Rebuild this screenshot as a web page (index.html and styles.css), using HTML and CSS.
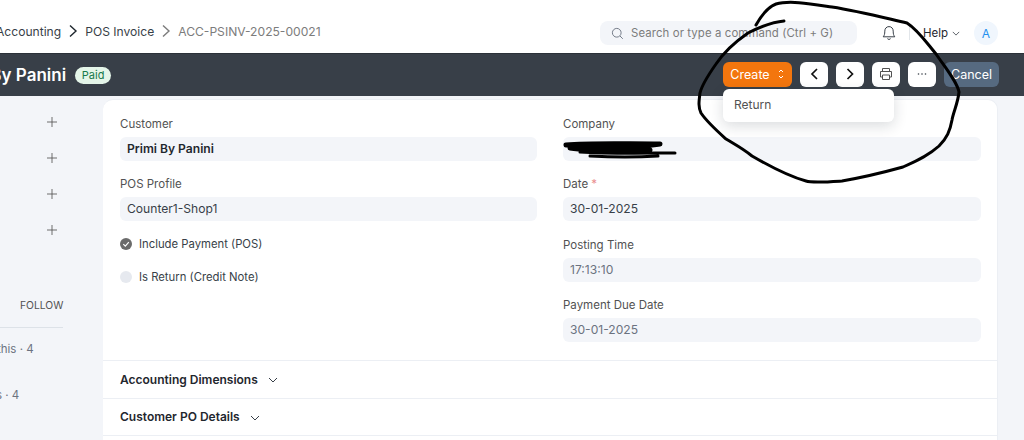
FILE: index.html
```html
<!DOCTYPE html>
<html lang="en">
<head>
<meta charset="utf-8">
<title>ACC-PSINV-2025-00021</title>
<link rel="stylesheet" href="styles.css">
</head>
<body>
<header class="topnav">
  <nav class="crumbs">
    <span class="crumb">Accounting</span>
    <svg class="crumb-sep" viewBox="0 0 10 14"><path d="M2 1.5 8 7 2 12.5"/></svg>
    <span class="crumb">POS Invoice</span>
    <svg class="crumb-sep crumb-sep-muted" viewBox="0 0 10 14"><path d="M2 1.5 8 7 2 12.5"/></svg>
    <span class="crumb crumb-muted">ACC-PSINV-2025-00021</span>
  </nav>
  <div class="search">
    <svg class="search-icon" viewBox="0 0 14 14"><circle cx="6.2" cy="6.2" r="4.7"/><path d="m9.7 9.7 3 3"/></svg>
    <span>Search or type a command (Ctrl + G)</span>
  </div>
  <svg class="bell" viewBox="0 0 16 16"><path d="M8 1.6c-2.6 0-4.2 2-4.2 4.5 0 3-.5 4.4-1.6 5.7h11.6c-1.100-1.300-1.600-2.700-1.600-5.700 0-2.500-1.600-4.500-4.200-4.500Z"/><path d="M6.400 13.600c.4 1 2.800 1 3.200 0"/></svg>
  <span class="nav-divider"></span>
  <span class="help">Help</span>
  <svg class="help-chev" viewBox="0 0 10 6"><path d="m1 1 4 4 4-4"/></svg>
  <span class="avatar">A</span>
</header>

<section class="pagebar">
  <div class="title-group">
    <h1 class="title">Primi By Panini</h1>
    <span class="badge">Paid</span>
  </div>
  <div class="actions">
    <button class="btn btn-create">Create
      <svg class="updown" viewBox="0 0 8 12"><path d="m2 4 2-2 2 2M2 8l2 2 2-2"/></svg>
    </button>
    <button class="btn btn-icon"><svg class="nav-icon" viewBox="0 0 10 14"><path d="M8 2 3 7l5 5"/></svg></button>
    <button class="btn btn-icon"><svg class="nav-icon" viewBox="0 0 10 14"><path d="m2.500 2 5 5-5 5"/></svg></button>
    <button class="btn btn-icon"><svg class="print-icon" viewBox="0 0 14 14"><path d="M3.500 4.500V1.500h7v3M3.500 10H1.500V4.500h11V10h-2"/><path d="M3.500 8h7v4.500h-7z"/></svg></button>
    <button class="btn btn-icon"><svg class="more-icon" viewBox="0 0 10 4"><circle cx="1.500" cy="2" r=".8"/><circle cx="5" cy="2" r=".8"/><circle cx="8.500" cy="2" r=".8"/></svg></button>
    <button class="btn btn-cancel">Cancel</button>
  </div>
  <div class="menu">Return</div>
</section>

<main class="page">
  <aside class="sidebar">
    <ul class="add-list">
      <li class="add-row"><svg class="plus" viewBox="0 0 12 12"><path d="M6 0v12M0 6h12"/></svg></li>
      <li class="add-row"><svg class="plus" viewBox="0 0 12 12"><path d="M6 0v12M0 6h12"/></svg></li>
      <li class="add-row"><svg class="plus" viewBox="0 0 12 12"><path d="M6 0v12M0 6h12"/></svg></li>
      <li class="add-row"><svg class="plus" viewBox="0 0 12 12"><path d="M6 0v12M0 6h12"/></svg></li>
    </ul>
    <div class="follow">FOLLOW</div>
    <div class="stat stat-first">this · 4</div>
    <div class="stat stat-second">s · 4</div>
  </aside>
  <article class="card">
    <div class="form-grid">
      <div class="col">
        <div class="field">
          <label class="label">Customer</label>
          <div class="input input-bold">Primi By Panini</div>
        </div>
        <div class="field">
          <label class="label">POS Profile</label>
          <div class="input">Counter1-Shop1</div>
        </div>
        <div class="check check-first"><span class="tick"><svg viewBox="0 0 12 12"><path d="m3.300 6.200 2 2 3.500-4"/></svg></span>Include Payment (POS)</div>
        <div class="check"><span class="tick tick-off"></span>Is Return (Credit Note)</div>
      </div>
      <div class="col">
        <div class="field">
          <label class="label">Company</label>
          <div class="input"></div>
        </div>
        <div class="field">
          <label class="label">Date <span class="req">*</span></label>
          <div class="input">30-01-2025</div>
        </div>
        <div class="field">
          <label class="label">Posting Time</label>
          <div class="input input-muted">17:13:10</div>
        </div>
        <div class="field">
          <label class="label">Payment Due Date</label>
          <div class="input input-muted">30-01-2025</div>
        </div>
      </div>
    </div>
    <div class="section">Accounting Dimensions <svg class="sec-chev" viewBox="0 0 10 6"><path d="m1 1 4 4 4-4"/></svg></div>
    <div class="section">Customer PO Details <svg class="sec-chev" viewBox="0 0 10 6"><path d="m1 1 4 4 4-4"/></svg></div>
    <div class="section section-empty"></div>
  </article>
</main>

<svg class="ink" viewBox="0 0 1024 440">
  <path class="ink-thin" d="M756 25C761 16 768 7 776 4C790 0 812 4 832 7C858 11 885 18 907 23C918 30 926 42 936 54C947 70 957 82 959 92C958 103 953 113 952 120C950 131 947 138 939 146C929 155 919 160 903 167C885 172 865 177 842 181C826 182 812 183 806 181C791 177 771 167 752 156C742 148 734 144 726 139C716 130 707 122 701 113C698 107 699 101 700 93C702 84 709 74 716 64C724 52 735 42 748 33C760 27 772 22 784 21"/>
  <path class="ink-scrub" d="M566 145C590 143 620 144 660 144C640 147 590 148 570 148C590 151 620 150 650 150"/>
  <path class="ink-thin" d="M580 152C610 154 650 153 675 153M590 156C610 157 640 157 658 156"/>
</svg>
</body>
</html>
```
FILE: styles.css
```css
* { box-sizing: border-box; }
html, body { margin: 0; padding: 0; }
body {
  width: 1024px;
  height: 440px;
  overflow: hidden;
  position: relative;
  background: #f3f5f9;
  font-family: Inter, "Liberation Sans", sans-serif;
  color: #1f272e;
}
.topnav {
  height: 53px;
  background: #fff;
  display: flex;
  align-items: center;
  padding: 13px 26px 0 0;
}
.crumbs {
  display: flex;
  align-items: center;
  margin-left: -4px;
  width: 604px;
  font-size: 12.1px;
  margin-top: -4px;
}
.crumb { color: #383f48; }
.crumb-muted { color: #7c7c7c; }
.crumb-sep { width: 10px; height: 14px; margin: 0 7px; }
.crumb-sep path { fill: none; stroke: #1f272e; stroke-width: 1.4; }
.crumb-sep-muted path { stroke: #7c7c7c; }
.search {
  width: 257px;
  height: 24px;
  border-radius: 8px;
  background: #f3f5f9;
  display: flex;
  align-items: center;
  padding-left: 11px;
  font-size: 11.4px;
  color: #7c7c7c;
  letter-spacing: .1px;
}
.search-icon { width: 13px; height: 13px; margin-right: 7px; }
.search-icon circle, .search-icon path { fill: none; stroke: #6b7280; stroke-width: 1; }
.bell { width: 16px; height: 16px; margin-left: 24px; }
.bell path { fill: none; stroke: #383f48; stroke-width: 1; }
.nav-divider { width: 1px; height: 14px; background: #e2e6ea; margin-left: 12px; }
.help { font-size: 11.5px; color: #1f272e; margin-left: 13px; }
.help-chev { width: 8px; height: 5px; margin-left: 4px; }
.help-chev path, .sec-chev path { fill: none; stroke: #383f48; stroke-width: 1; }
.avatar {
  width: 24px;
  height: 24px;
  border-radius: 50%;
  background: #f0f6fd;
  color: #2490ef;
  font-size: 12px;
  display: flex;
  align-items: center;
  justify-content: center;
  margin-left: auto;
}
.pagebar {
  height: 43px;
  background: #383f48;
  border-top: 1px solid #2b3138;
  display: flex;
  align-items: center;
  justify-content: space-between;
  padding-right: 25px;
  position: relative;
  z-index: 2;
}
.title-group { display: flex; align-items: center; margin-left: -56px; }
.title { margin: 0; font-size: 17px; font-weight: 600; color: #fff; white-space: nowrap; }
.badge {
  margin-left: 9px;
  width: 36px;
  height: 17px;
  border-radius: 9px;
  background: #e4f5e9;
  color: #16794c;
  font-size: 11px;
  display: flex;
  align-items: center;
  justify-content: center;
}
.actions { display: flex; gap: 8px; margin-bottom: 2px; }
.btn {
  height: 25px;
  border: 0;
  border-radius: 6px;
  padding: 0;
  font-family: inherit;
  font-size: 12.5px;
  display: flex;
  align-items: center;
  justify-content: center;
}
.btn-create { width: 69px; background: #f3760e; color: #fff; }
.updown { width: 8px; height: 12px; margin-left: 7px; }
.updown path { fill: none; stroke: #fff; stroke-width: 1; }
.btn-icon { width: 28px; background: #fff; color: #1f272e; }
.nav-icon { width: 10px; height: 14px; }
.nav-icon path { fill: none; stroke: #111; stroke-width: 1.700; }
.print-icon { width: 14px; height: 14px; }
.print-icon path { fill: none; stroke: #525252; stroke-width: 1; }
.more-icon { width: 10px; height: 4px; }
.more-icon circle { fill: #383f48; }
.btn-cancel { width: 55px; background: #566a80; color: #fff; }
.menu {
  position: absolute;
  left: 723px;
  top: 35px;
  width: 171px;
  height: 33px;
  background: #fff;
  border-radius: 6px;
  box-shadow: 0 4px 14px rgba(25, 39, 52, .16);
  padding: 8px 0 0 11px;
  font-size: 12px;
  color: #525252;
}
.page { display: flex; padding-top: 3px; height: 344px; }
.sidebar { width: 103px; flex: none; position: relative; }
.add-list { list-style: none; margin: 0; padding: 5px 0 0; }
.add-row { height: 36px; display: flex; justify-content: flex-end; align-items: center; padding: 0 46px 0 0; }
.plus { width: 10px; height: 10px; }
.plus path { fill: none; stroke: #525252; stroke-width: 1; }
.follow {
  margin-top: 51px;
  margin-left: -40px;
  width: 103px;
  padding: 0 0 15px 60px;
  border-bottom: 1px solid #dde2e8;
  font-size: 10.300px;
  color: #525252;
  text-align: left;
  height: 29px;
}
.stat { font-size: 11.500px; color: #6b7280; }
.stat-first { margin-top: 14px; margin-left: -3px; }
.stat-second { margin-top: 32px; margin-left: -4px; }
.card {
  width: 895px;
  background: #fff;
  border-radius: 10px 10px 0 0;
  border-top: 1px solid #eceff4;
  border-right: 1px solid #eceff4;
  overflow: hidden;
}
.form-grid {
  display: grid;
  grid-template-columns: 417px 418px;
  column-gap: 26px;
  padding: 16px 0 0 17px;
  height: 260px;
}
.field { padding-bottom: 15.300px; }
.label { display: block; height: 16px; margin-bottom: 5px; font-size: 11.500px; line-height: 16px; color: #525252; }
.req { color: #ea8f8f; }
.input {
  height: 24px;
  border-radius: 6px;
  background: #f3f5f9;
  padding-left: 7px;
  font-size: 12.100px;
  line-height: 24px;
  color: #383f48;
}
.input-bold { font-weight: 600; color: #1f272e; }
.input-muted { color: #6b7280; }
.check {
  display: flex;
  align-items: center;
  height: 33px;
  font-size: 11.300px;
  color: #383f48;
}
.check-first { margin-top: -9px; }
.tick {
  width: 12px;
  height: 12px;
  border-radius: 50%;
  background: #6b6b6b;
  margin-right: 7px;
  display: block;
}
.tick svg { display: block; width: 12px; height: 12px; }
.tick path { fill: none; stroke: #fff; stroke-width: 1.200; }
.tick-off { background: #e6e9ef; }
.section {
  border-top: 1px solid #eceff4;
  height: 37.500px;
  padding-left: 17px;
  display: flex;
  align-items: center;
  font-size: 12px;
  font-weight: 600;
  color: #1f272e;
}
.sec-chev { width: 10px; height: 6px; margin-left: 10px; margin-top: 2px; }
.ink {
  position: absolute;
  left: 0;
  top: 0;
  width: 1024px;
  height: 440px;
  z-index: 5;
  pointer-events: none;
}
.ink-thin { fill: none; stroke: #000; stroke-width: 3; stroke-linecap: round; stroke-linejoin: round; }
.ink-scrub { fill: none; stroke: #000; stroke-width: 5; stroke-linecap: round; stroke-linejoin: round; }
```
